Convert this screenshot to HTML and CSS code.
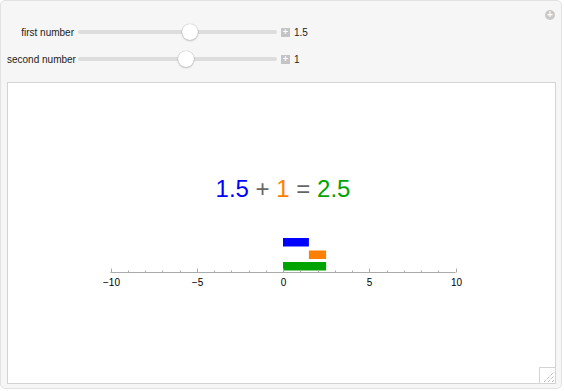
FILE: index.html
```html
<!DOCTYPE html>
<html lang="en">
  <head>
    <meta charset="UTF-8" />
    <title>Adding Two Numbers</title>
    <link rel="stylesheet" href="styles.css">
  </head>
  <body>
    <div class="panel">
      <span class="corner-btn">+</span>
      <div class="controls">
        <div class="control-row">
          <label class="control-label">first number</label>
          <div class="track"><span class="thumb thumb-first"></span></div>
          <span class="plus-box">+</span>
          <span class="control-value">1.5</span>
        </div>
        <div class="control-row">
          <label class="control-label">second number</label>
          <div class="track"><span class="thumb thumb-second"></span></div>
          <span class="plus-box">+</span>
          <span class="control-value">1</span>
        </div>
      </div>
      <div class="plot">
        <svg class="plot-svg" width="547" height="300" viewBox="0 0 547 300">
          <text class="equation" x="275" y="114" text-anchor="middle"><tspan fill="#0000ff">1.5</tspan><tspan fill="#666666"> + </tspan><tspan fill="#ff7f00">1</tspan><tspan fill="#666666"> = </tspan><tspan fill="#00a300">2.5</tspan></text>
          <rect x="275" y="155" width="25.9" height="8.5" fill="#0000ff" />
          <rect x="300.9" y="167.5" width="17.2" height="8.5" fill="#ff7f00" />
          <rect x="275" y="179" width="43.1" height="8.5" fill="#00a300" />
          <g id="axis" stroke="#aaaaaa" stroke-width="1"></g>
          <g id="labels" class="tick-label" text-anchor="middle" fill="#000"></g>
        </svg>
        <span class="grip">
          <svg width="14" height="14" viewBox="0 0 14 14">
            <path d="M3 13 L13 3 M7 13 L13 7 M11 13 L13 11" stroke="#999" stroke-width="1" stroke-dasharray="1 1" />
          </svg>
        </span>
      </div>
    </div>
    <script>
      const ns = "http://www.w3.org/2000/svg";
      const axis = document.getElementById("axis");
      const labels = document.getElementById("labels");
      const x0 = 275, unit = 17.25, y = 189.5;

      const line = (x1, y1, x2, y2) => {
        const l = document.createElementNS(ns, "line");
        l.setAttribute("x1", x1);
        l.setAttribute("y1", y1);
        l.setAttribute("x2", x2);
        l.setAttribute("y2", y2);
        axis.appendChild(l);
      };

      line(x0 - 10 * unit, y, x0 + 10 * unit, y);
      for (let i = -10; i <= 10; i++) {
        const x = Math.round(x0 + i * unit) + 0.5;
        const major = i % 5 == 0;
        line(x, y, x, y - (major ? 4 : 2));
        if (major) {
          const t = document.createElementNS(ns, "text");
          t.setAttribute("x", x);
          t.setAttribute("y", y + 13);
          t.textContent = i < 0 ? "\u2212" + -i : i;
          labels.appendChild(t);
        }
      }
    </script>
  </body>
</html>
```

FILE: styles.css
```css
* {
  box-sizing: border-box;
}
html {
  font-family: "Liberation Sans", Arial, sans-serif;
}
body {
  margin: 0;
  background: #ffffff;
}
.panel {
  position: relative;
  width: 562px;
  height: 389px;
  background: #f6f6f6;
  border: 1px solid #e2e2e2;
  border-radius: 5px;
  padding: 22px 6px 0 6px;
}
.corner-btn {
  position: absolute;
  top: 9px;
  right: 6px;
  width: 10px;
  height: 10px;
  border-radius: 50%;
  background: #c8c8c8;
  color: #fff;
  font-size: 10px;
  font-weight: bold;
  line-height: 10px;
  text-align: center;
}
.controls {
  display: flex;
  flex-direction: column;
  gap: 9px;
}
.control-row {
  display: flex;
  align-items: center;
  height: 18px;
}
.control-label {
  flex-shrink: 0;
  width: 67px;
  white-space: nowrap;
  text-align: right;
  font-size: 10px;
  color: #222;
  margin-right: 4px;
}
.track {
  position: relative;
  flex-shrink: 0;
  width: 199px;
  height: 4px;
  border-radius: 2px;
  background: #dddddd;
  margin-right: 4px;
}
.thumb {
  position: absolute;
  top: -6px;
  width: 16px;
  height: 16px;
  border-radius: 50%;
  background: #fff;
  box-shadow: 0 0 1px rgba(0, 0, 0, 0.35), 0 1px 2px rgba(0, 0, 0, 0.2);
}
.thumb-first {
  left: 104px;
}
.thumb-second {
  left: 100px;
}
.plus-box {
  width: 9px;
  height: 9px;
  background: #c4c4c4;
  color: #fff;
  font-size: 9px;
  font-weight: bold;
  line-height: 9px;
  text-align: center;
  margin-right: 4px;
}
.control-value {
  font-size: 10px;
  color: #222;
}
.plot {
  position: relative;
  margin: 14px 0 0 0;
  width: 549px;
  height: 302px;
  background: #fff;
  border: 1px solid #d4d4d4;
}
.plot-svg {
  display: block;
}
.equation {
  font-size: 24px;
  font-family: "Liberation Sans", Arial, sans-serif;
}
.tick-label {
  font-size: 10px;
  font-family: "Liberation Sans", Arial, sans-serif;
}
.grip {
  position: absolute;
  right: 0;
  bottom: 0;
  width: 16px;
  height: 16px;
  border-left: 1px solid #d4d4d4;
  border-top: 1px solid #d4d4d4;
  display: flex;
  align-items: center;
  justify-content: center;
}
```
